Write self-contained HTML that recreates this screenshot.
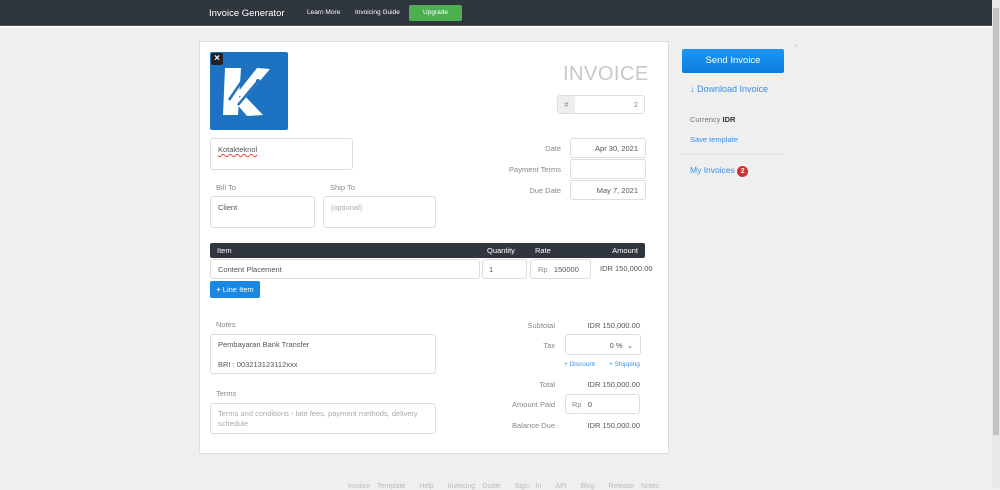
<!DOCTYPE html>
<html><head><style>
*{box-sizing:border-box;margin:0;padding:0}
body{width:1000px;height:488px;overflow:hidden;background:#efefef;font-family:"Liberation Sans",sans-serif;position:relative;color:#555}
.a{position:absolute}
.hdr{left:0;top:0;width:1000px;height:26px;background:#30363d;border-bottom:1px solid #555}
.inp{position:absolute;background:#fff;border:1px solid #ddd;border-radius:3px;font-size:7.5px;color:#555}
.lbl{position:absolute;font-size:7.5px;color:#888}
.r{text-align:right}
</style></head><body>
<div class="a hdr"></div>
<div class="a" style="left:0;top:26px;width:992px;height:2px;background:#fafafa"></div>
<div class="a" style="left:209px;top:8px;color:#fff;font-size:9.5px">Invoice Generator</div>
<div class="a" style="left:307px;top:9px;color:#fff;font-size:6.5px">Learn More</div>
<div class="a" style="left:355px;top:9px;color:#fff;font-size:6.5px">Invoicing Guide</div>
<div class="a" style="left:409px;top:5px;width:53px;height:16px;background:#4cb050;border-radius:2px;color:#fff;font-size:6.5px;text-align:center;line-height:16px">Upgrade</div>
<div class="a" style="left:992px;top:0;width:8px;height:488px;background:#e8e8e8"></div>
<div class="a" style="left:993px;top:8px;width:6px;height:427px;background:#c2c2c2"></div>

<div class="a" style="left:199px;top:41px;width:470px;height:413px;background:#fff;border:1px solid #ddd"></div>
<svg class="a" style="left:210px;top:52px" width="78" height="78" viewBox="0 0 78 78">
<rect width="78" height="78" rx="2" fill="#1d72c2"/>
<polygon points="15,16 31,16 28,63 13,63" fill="#fff"/>
<polygon points="25,44 47,16 60,17 37,44" fill="#fff"/>
<polygon points="33,42 53,63 37,64 25,50" fill="#fff"/>
<line x1="19" y1="48" x2="36" y2="23" stroke="#1d72c2" stroke-width="2.5"/>
<circle cx="36" cy="23" r="2" fill="#1d72c2"/>
<line x1="28" y1="53" x2="48" y2="29" stroke="#1d72c2" stroke-width="2.5"/>
<circle cx="48" cy="29" r="2" fill="#1d72c2"/>
</svg>
<div class="a" style="left:211px;top:53px;width:12px;height:12px;background:#222;border-radius:2px;color:#fff;font-size:10px;line-height:12px;text-align:center;font-weight:bold">×</div>
<div class="a" style="left:563px;top:63px;font-size:20px;color:#c8c8c8;letter-spacing:0.5px">INVOICE</div>
<div class="inp" style="left:557px;top:95px;width:88px;height:19px"><div style="width:17px;height:17px;background:#eee;text-align:center;line-height:17px;color:#888">#</div><div class="a" style="right:6px;top:4px;color:#888">2</div></div>
<div class="inp" style="left:210px;top:138px;width:143px;height:32px;padding:6px 7px"><span style="text-decoration:underline wavy #e44;text-decoration-thickness:1px">Kotakteknol</span></div>
<div class="lbl" style="left:216px;top:183px">Bill To</div>
<div class="lbl" style="left:330px;top:183px">Ship To</div>
<div class="inp" style="left:210px;top:196px;width:105px;height:32px;padding:6px 7px">Client</div>
<div class="inp" style="left:323px;top:196px;width:113px;height:32px;padding:6px 7px;color:#aaa">(optional)</div>
<div class="lbl" style="left:500px;top:144px;width:61px;text-align:right">Date</div>
<div class="lbl" style="left:490px;top:165px;width:71px;text-align:right">Payment Terms</div>
<div class="lbl" style="left:500px;top:186px;width:61px;text-align:right">Due Date</div>
<div class="inp r" style="left:570px;top:138px;width:76px;height:20px;padding:5px 7px">Apr 30, 2021</div>
<div class="inp" style="left:570px;top:159px;width:76px;height:20px"></div>
<div class="inp r" style="left:570px;top:180px;width:76px;height:20px;padding:5px 7px">May 7, 2021</div>

<div class="a" style="left:210px;top:243px;width:435px;height:15px;background:#30363d;border-radius:2px;color:#fff;font-size:7.5px;line-height:15px">
<span class="a" style="left:7px">Item</span><span class="a" style="left:277px">Quantity</span><span class="a" style="left:325px">Rate</span><span class="a" style="right:7px">Amount</span></div>
<div class="inp" style="left:210px;top:259px;width:270px;height:20px;padding:5px 7px">Content Placement</div>
<div class="inp" style="left:482px;top:259px;width:45px;height:20px;padding:5px 6px">1</div>
<div class="inp" style="left:530px;top:259px;width:61px;height:20px;padding:5px 7px"><span style="color:#888">Rp</span>&nbsp;&nbsp; 150000</div>
<div class="a" style="left:600px;top:264px;font-size:7.5px">IDR 150,000.00</div>
<div class="a" style="left:210px;top:281px;width:50px;height:17px;background:#1a88e0;border-radius:2px;color:#fff;font-size:7.5px;line-height:17px;text-align:center"><b>+</b> Line Item</div>

<div class="lbl" style="left:216px;top:320px">Notes</div>
<div class="inp" style="left:210px;top:334px;width:226px;height:40px;padding:5px 7px;line-height:10px">Pembayaran Bank Transfer<br><br>BRI : 003213123112xxx</div>
<div class="lbl" style="left:216px;top:389px">Terms</div>
<div class="inp" style="left:210px;top:403px;width:226px;height:31px;padding:5px 7px;color:#aaa;line-height:10px">Terms and conditions - late fees, payment methods, delivery schedule</div>

<div class="lbl r" style="left:490px;top:321px;width:65px">Subtotal</div>
<div class="a r" style="left:570px;top:321px;width:70px;font-size:7.5px">IDR 150,000.00</div>
<div class="lbl r" style="left:490px;top:341px;width:65px">Tax</div>
<div class="inp r" style="left:565px;top:334px;width:76px;height:21px;padding:6px 7px">0 % &nbsp;⌄</div>
<div class="a" style="left:564px;top:361px;font-size:6.5px;color:#3b8de0">+ Discount</div>
<div class="a" style="left:609px;top:361px;font-size:6.5px;color:#3b8de0">+ Shipping</div>
<div class="lbl r" style="left:490px;top:380px;width:65px">Total</div>
<div class="a r" style="left:570px;top:380px;width:70px;font-size:7.5px">IDR 150,000.00</div>
<div class="lbl r" style="left:480px;top:400px;width:75px">Amount Paid</div>
<div class="inp" style="left:565px;top:394px;width:75px;height:20px;padding:5px 6px"><span style="color:#888">Rp</span>&nbsp;&nbsp; 0</div>
<div class="lbl r" style="left:480px;top:421px;width:75px">Balance Due</div>
<div class="a r" style="left:570px;top:421px;width:70px;font-size:7.5px">IDR 150,000.00</div>

<div class="a" style="left:682px;top:49px;width:102px;height:24px;background:linear-gradient(#1d95f0,#0a7ee0);border-radius:2px;color:#fff;font-size:9.5px;text-align:center;line-height:24px">Send Invoice</div>
<div class="a" style="left:690px;top:84px;font-size:9px;color:#3b8de0">↓ Download Invoice</div>
<div class="a" style="left:690px;top:115px;font-size:7.5px;color:#777">Currency <b style="color:#333">IDR</b></div>
<div class="a" style="left:690px;top:135px;font-size:7.5px;color:#3b8de0">Save template</div>
<div class="a" style="left:680px;top:154px;width:104px;height:1px;background:#e4e4e4"></div>
<div class="a" style="left:690px;top:165px;font-size:8.5px;color:#3b8de0">My Invoices <span style="display:inline-block;width:11px;height:11px;border-radius:6px;background:#d03030;color:#fff;font-size:7px;text-align:center;line-height:11px;font-weight:bold">2</span></div>
<div class="a" style="left:794px;top:44px;font-size:6px;color:#bbb">×</div>

<div class="a" style="left:348px;top:483px;font-size:7px;color:#bbb;word-spacing:5px;white-space:nowrap">Invoice Template &nbsp;Help &nbsp;Invoicing Guide &nbsp;Sign In &nbsp;API &nbsp;Blog &nbsp;Release Notes</div>
</body></html>
